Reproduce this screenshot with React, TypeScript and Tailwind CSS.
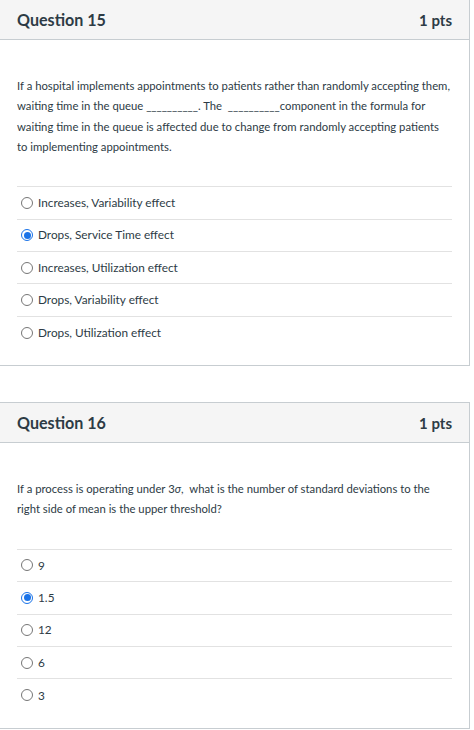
import React from "react";

type Q = {
  title: string;
  body: React.ReactNode;
  options: string[];
  selected: number;
};

function Radio({ checked }: { checked: boolean }) {
  if (checked) {
    return (
      <span className="flex h-[12px] w-[12px] shrink-0 items-center justify-center rounded-full border border-[#1a73e8] bg-white">
        <span className="h-[7px] w-[7px] rounded-full bg-[#1a73e8]" />
      </span>
    );
  }
  return <span className="h-[12px] w-[12px] shrink-0 rounded-full border border-[#767676] bg-white" />;
}

function Card({ q }: { q: Q }) {
  return (
    <div className="ml-[-1px] w-[471px] border border-[#c7cdd1] bg-white">
      <div className="flex h-[40px] items-center justify-between border-b border-[#c7cdd1] bg-[#f5f5f5] pl-[17px] pr-[17px]">
        <span className="pt-[1px] text-[16.1px] font-bold text-[#2d3b45]">{q.title}</span>
        <span className="pt-[1px] text-[15px] font-bold text-[#2d3b45]">1 pts</span>
      </div>
      <div className="pb-[16px] pl-[17px] pr-[17px] pt-[36px]">
        <div className="text-[11.3px] leading-[20.3px] text-[#2d3b45]">{q.body}</div>
        <div className="mt-[29px] border-t border-[#e2e2e2]">
          {q.options.map((o, i) => (
            <div
              key={i}
              className={`flex h-[32.4px] items-center gap-[5px] pl-[4px] text-[11.8px] text-[#2d3b45] ${
                i < q.options.length - 1 ? "border-b border-[#e2e2e2]" : ""
              }`}
            >
              <Radio checked={i === q.selected} />
              <span>{o}</span>
            </div>
          ))}
        </div>
      </div>
    </div>
  );
}

export default function App() {
  const q15: Q = {
    title: "Question 15",
    body: (
      <>
        If a hospital implements appointments to patients rather than randomly accepting them, waiting time in the
        queue __________. The &nbsp;__________component in the formula for waiting time in the queue is affected due to
        change from randomly accepting patients to implementing appointments.
      </>
    ),
    options: [
      "Increases, Variability effect",
      "Drops, Service Time effect",
      "Increases, Utilization effect",
      "Drops, Variability effect",
      "Drops, Utilization effect",
    ],
    selected: 1,
  };
  const q16: Q = {
    title: "Question 16",
    body: (
      <>
        If a process is operating under 3<i>σ</i>,&nbsp; what is the number of standard deviations to the right side of
        mean is the upper threshold?
      </>
    ),
    options: ["9", "1.5", "12", "6", "3"],
    selected: 1,
  };
  return (
    <div className="h-[730px] w-[474px] overflow-hidden bg-white font-['Lato',sans-serif]">
      <div className="mt-[-1px]">
        <Card q={q15} />
      </div>
      <div className="mt-[36px]">
        <Card q={q16} />
      </div>
    </div>
  );
}
